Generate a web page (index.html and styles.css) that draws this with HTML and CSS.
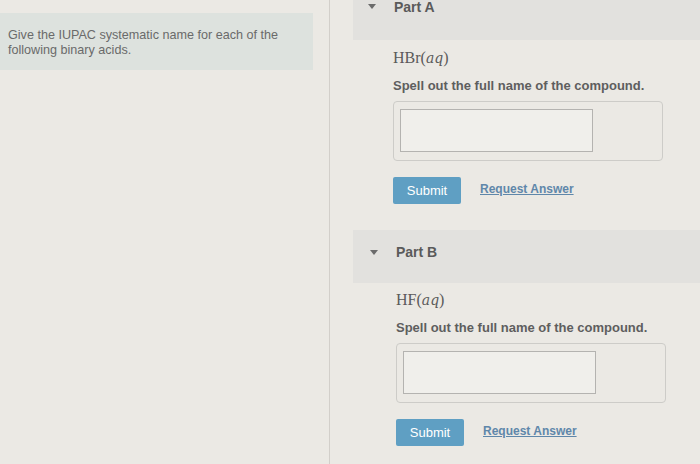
FILE: index.html
```html
<!DOCTYPE html>
<html>
<head>
<meta charset="utf-8">
<link rel="stylesheet" href="styles.css">
</head>
<body>
<div class="page">
  <aside class="left">
    <div class="intro">Give the IUPAC systematic name for each of the following binary acids.</div>
  </aside>
  <main class="right">
    <section class="part part-a">
      <div class="part-head"><span class="tri"></span><span class="part-title">Part A</span></div>
      <div class="part-body">
        <div class="formula">HBr(<i>aq</i>)</div>
        <div class="prompt">Spell out the full name of the compound.</div>
        <div class="answer-box"><div class="input"></div></div>
        <div class="actions"><button class="submit">Submit</button><a class="request">Request Answer</a></div>
      </div>
    </section>
    <section class="part part-b">
      <div class="part-head"><span class="tri"></span><span class="part-title">Part B</span></div>
      <div class="part-body">
        <div class="formula">HF(<i>aq</i>)</div>
        <div class="prompt">Spell out the full name of the compound.</div>
        <div class="answer-box"><div class="input"></div></div>
        <div class="actions"><button class="submit">Submit</button><a class="request">Request Answer</a></div>
      </div>
    </section>
  </main>
</div>
</body>
</html>
```
FILE: styles.css
```css
html, body {
  margin: 0;
  padding: 0;
  background: #ebe9e4;
  font-family: "Liberation Sans", Arial, sans-serif;
}
.page {
  display: flex;
  width: 700px;
  height: 464px;
  overflow: hidden;
}
.left {
  width: 330px;
  flex: none;
  border-right: 1px solid #d2cfca;
  padding-top: 13px;
  box-sizing: border-box;
}
.intro {
  width: 313px;
  height: 57px;
  box-sizing: border-box;
  background: #dde2de;
  padding: 15px 8px 0;
  font-size: 12.6px;
  line-height: 15px;
  color: #6a6a6a;
}
.right {
  flex: 1;
  padding-left: 23px;
}
.part-head {
  display: flex;
  align-items: flex-start;
  background: #e2e1de;
  padding-left: 15px;
}
.part-a .part-head {
  height: 40px;
}
.part-a .part-head .tri { margin-top: 4px; }
.part-a .part-title { margin-top: -1px; }
.part-b { margin-top: 26px; }
.part-b .part-head { height: 53px; padding-left: 17px; }
.part-b .part-head .tri { margin-top: 20px; }
.part-b .part-title { margin-top: 14px; }
.tri {
  width: 0;
  height: 0;
  border-left: 4px solid transparent;
  border-right: 4px solid transparent;
  border-top: 5px solid #6b6b6b;
}
.part-title {
  margin-left: 18px;
  font-size: 14px;
  line-height: 16px;
  font-weight: bold;
  color: #5a5a5a;
}
.part-body {
  padding-left: 40px;
  padding-top: 9px;
}
.part-b .part-body { padding-left: 43px; padding-top: 8px; }
.formula {
  font-family: "Liberation Serif", "Times New Roman", serif;
  font-size: 16px;
  line-height: 18px;
  color: #5a5a5a;
}
.formula i { font-family: "DejaVu Serif", serif; font-size: 14px; }
.prompt {
  margin-top: 11px;
  font-size: 13px;
  line-height: 16px;
  font-weight: bold;
  color: #5e5e5e;
}
.answer-box {
  margin-top: 7px;
  width: 270px;
  height: 60px;
  box-sizing: border-box;
  border: 1px solid #cdccc8;
  border-radius: 4px;
  padding: 7px 6px;
}
.input {
  width: 193px;
  height: 43px;
  box-sizing: border-box;
  border: 1.5px solid #b4b3b0;
  background: #f0efeb;
}
.actions {
  margin-top: 16px;
  display: flex;
  align-items: center;
}
.submit {
  width: 68px;
  height: 27px;
  border: none;
  border-radius: 2px;
  background: #5f9fc3;
  color: #fff;
  font-family: "Liberation Sans", Arial, sans-serif;
  font-size: 13px;
  padding: 0;
}
.request {
  margin-left: 19px;
  margin-top: -4px;
  font-size: 12px;
  font-weight: bold;
  color: #5f87aa;
  text-decoration: underline;
}
```
